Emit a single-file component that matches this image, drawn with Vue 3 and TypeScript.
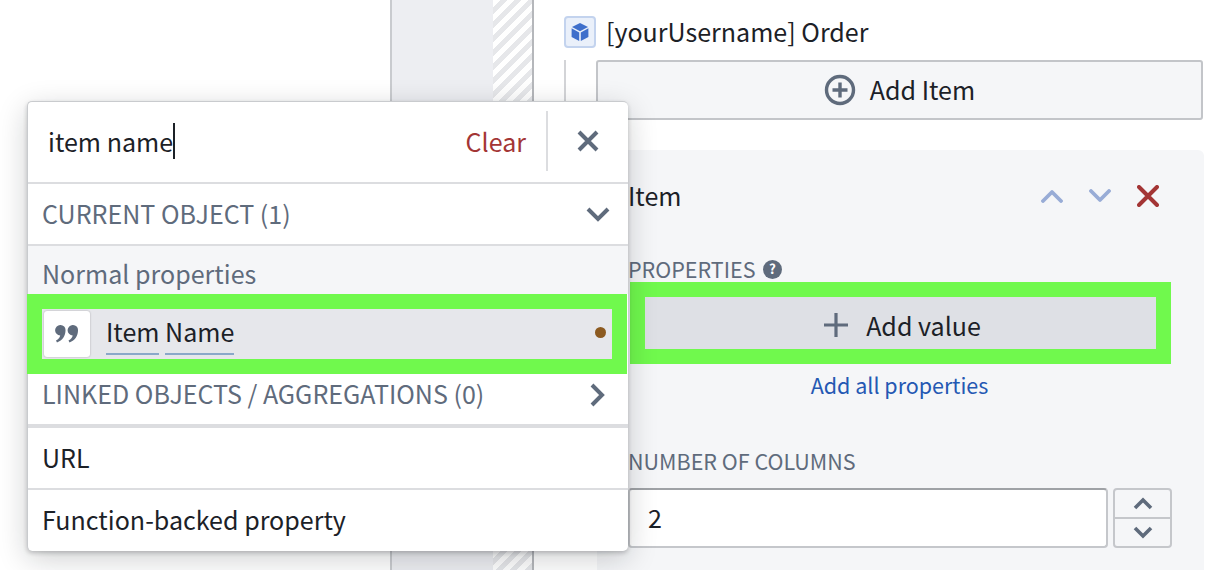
<script setup lang="ts">
const sections = ['URL', 'Function-backed property']
</script>

<template>
  <div class="page">
    <div class="left"></div>
    <div class="rail"></div>
    <div class="hatch"></div>
    <main class="main">
      <div class="obj">
        <span class="cube">
          <svg width="20" height="20" viewBox="0 0 20 20"><path d="M10 1 L18 5 L10 9.2 L2 5Z" fill="#3f6fcb"/><path d="M1.6 6.2 L9.2 10.4 V19 L1.6 15Z" fill="#3f6fcb"/><path d="M18.4 6.2 L10.8 10.4 V19 L18.4 15Z" fill="#3f6fcb"/></svg>
        </span>
        <span class="obj-name">[yourUsername] Order</span>
      </div>
      <div class="add-row">
        <div class="tree-line"></div>
        <button class="add-item">
          <svg width="32" height="32" viewBox="0 0 32 32" fill="none" stroke="#5f6b7c" stroke-width="3.4"><circle cx="16" cy="16" r="13.5"/><path d="M16 8.5v15M8.5 16h15"/></svg>
          <span class="lift">Add Item</span>
        </button>
      </div>
      <section class="card">
        <div class="card-head">
          <span class="card-title">Item</span>
          <div class="card-actions">
            <svg width="22" height="14" viewBox="0 0 22 14" fill="none" stroke="#98acd6" stroke-width="3.8" stroke-linecap="round" stroke-linejoin="round"><path d="M2 12 L11 3 L20 12"/></svg>
            <svg width="22" height="14" viewBox="0 0 22 14" fill="none" stroke="#98acd6" stroke-width="3.8" stroke-linecap="round" stroke-linejoin="round"><path d="M2 2 L11 11 L20 2"/></svg>
            <svg width="22" height="22" viewBox="0 0 22 22" fill="none" stroke="#a33535" stroke-width="4" stroke-linecap="round"><path d="M2 2 L20 20M20 2 L2 20"/></svg>
          </div>
        </div>
        <div class="label props-label">
          PROPERTIES
          <svg width="19" height="19" viewBox="0 0 20 20"><circle cx="10" cy="10" r="10" fill="#5f6b7c"/><text x="10" y="15" text-anchor="middle" font-size="14" font-weight="700" fill="#fff" font-family="Noto Sans CJK SC, sans-serif">?</text></svg>
        </div>
        <div class="add-value-frame">
          <button class="add-value">
            <svg width="24" height="24" viewBox="0 0 24 24" stroke="#5f6b7c" stroke-width="3.2"><path d="M12 0v24M0 12h24"/></svg>
            <span>Add value</span>
          </button>
        </div>
        <a class="add-all">Add all properties</a>
        <div class="label cols-label">NUMBER OF COLUMNS</div>
        <div class="num-row">
          <div class="num-input">2</div>
          <div class="stepper">
            <span class="step"><svg width="20" height="13" viewBox="0 0 20 13" fill="none" stroke="#5f6b7c" stroke-width="3.6"><path d="M2 11 L10 3 L18 11"/></svg></span>
            <span class="step"><svg width="20" height="13" viewBox="0 0 20 13" fill="none" stroke="#5f6b7c" stroke-width="3.6"><path d="M2 2 L10 10 L18 2"/></svg></span>
          </div>
        </div>
      </section>
    </main>

    <div class="popover">
      <div class="search">
        <span class="query">item name</span><span class="caret"></span>
        <span class="clear">Clear</span>
        <span class="vsep"></span>
        <svg class="close" width="22" height="22" viewBox="0 0 22 22" fill="none" stroke="#5f6b7c" stroke-width="4"><path d="M2 2 L20 20M20 2 L2 20"/></svg>
      </div>
      <div class="sec-head first">
        <span>CURRENT OBJECT (1)</span>
        <svg width="24" height="16" viewBox="0 0 24 16" fill="none" stroke="#5f6b7c" stroke-width="4"><path d="M2 3 L12 13 L22 3"/></svg>
      </div>
      <div class="normal">Normal properties</div>
      <div class="green-frame">
        <div class="prop-row">
          <span class="quote">
            <svg width="24" height="18" viewBox="0 0 24 18" fill="#5f6b7c"><path d="M5.5 0a5 5 0 0 1 5 5.4c0 5-3 10-8.500 12L1 15.500c2.500-1.200 3.800-3 4.200-5A5.200 5.200 0 0 1 5.500 0Z"/><path d="M18 0a5 5 0 0 1 5 5.400c0 5-3 10-8.500 12l-1-1.900c2.500-1.200 3.800-3 4.200-5A5.200 5.200 0 0 1 18 0Z"/></svg>
          </span>
          <span class="prop-name"><u>Item</u> <u>Name</u></span>
          <span class="dot"></span>
        </div>
      </div>
      <div class="sec-head linked">
        <span>LINKED OBJECTS / AGGREGATIONS (0)</span>
        <svg width="16" height="24" viewBox="0 0 16 24" fill="none" stroke="#5f6b7c" stroke-width="4"><path d="M3 2 L13 12 L3 22"/></svg>
      </div>
      <div v-for="s in sections" :key="s" class="plain">{{ s }}</div>
    </div>
  </div>
</template>

<style>
html, body { margin: 0; background: #fff; }
</style>

<style scoped>
.page {
  position: relative;
  width: 1220px;
  height: 570px;
  overflow: hidden;
  display: flex;
  background: #fff;
  font-family: "Noto Sans CJK SC", "Noto Sans", sans-serif;
  color: #1c2127;
  font-size: 25.05px;
}
.left { width: 390px; flex: none; }
.rail { width: 103px; flex: none; background: #edeef2; border-left: 2px solid #c9cbcf; box-sizing: border-box; }
.hatch {
  width: 41px; flex: none; box-sizing: border-box;
  border-right: 2px solid #b5b7bb;
  background: repeating-linear-gradient(135deg, #fff 0 5px, #e6e7ea 5px 10px);
}
.main { flex: 1; min-width: 0; padding: 16px 16px 0 30px; display: flex; flex-direction: column; }
.obj { display: flex; align-items: center; gap: 10px; height: 32px; }
.cube {
  width: 32px; height: 32px; box-sizing: border-box; border: 2px solid #c3d3ee; border-radius: 4px;
  background: #eaf0fa; display: flex; align-items: center; justify-content: center;
}
.obj-name { line-height: 30px; padding-bottom: 2px; }
.add-row { display: flex; margin-top: 12px; }
.tree-line { width: 2px; background: #d3d4d7; margin-right: 30px; height: 60px; }
.add-item {
  flex: none; width: 607px; height: 60px; box-sizing: border-box; padding: 0;
  border: 2px solid #c3c5c9; border-radius: 3px; background: #f5f6f8;
  display: flex; align-items: center; justify-content: center; gap: 14px;
  font: inherit; color: inherit;
}
.lift { padding-bottom: 2px; }
.card {
  margin: 30px 0 0 33px; width: 607px; height: 430px; box-sizing: border-box; flex: none;
  background: #f5f6f8; border-radius: 6px; padding: 30px 0 0 31px;
}
.card-head { display: flex; align-items: center; justify-content: space-between; padding-right: 45px; height: 32px; }
.card-title { padding-bottom: 2px; line-height: 30px; }
.card-actions { display: flex; align-items: center; gap: 26px; }
.label { font-size: 21.5px; color: #5f6b7c; line-height: 28px; }
.props-label { display: flex; align-items: center; gap: 8px; margin-top: 43px; }
.add-value-frame {
  width: 541px; height: 82px; box-sizing: border-box; border: 15px solid #70f94d; margin: -1px 0 0 2px;
}
.add-value {
  width: 100%; height: 100%; padding: 4px 0 0 4px; border: 0; background: #dee0e5;
  display: flex; align-items: center; justify-content: center; gap: 18px;
  font: inherit; color: inherit;
}
.add-all { display: block; width: 541px; text-align: center; color: #2458b3; font-size: 21.5px; line-height: 28px; margin-top: 7px; margin-left: 1px; }
.cols-label { margin-top: 48px; }
.num-row { display: flex; margin-top: 13px; gap: 5px; }
.num-input {
  width: 480px; height: 60px; box-sizing: border-box; background: #fff;
  border: 2px solid #c5c7cb; border-top-color: #9fa2a6; border-radius: 4px;
  padding-left: 18px; line-height: 54px;
}
.stepper {
  width: 59px; height: 60px; box-sizing: border-box; border: 2px solid #c5c7cb; border-radius: 4px;
  display: flex; flex-direction: column; background: #f5f6f8;
}
.step { flex: 1; display: flex; align-items: center; justify-content: center; }
.step + .step { border-top: 2px solid #c5c7cb; }

.popover {
  position: absolute; left: 27px; top: 101px; width: 601px; height: 450px; box-sizing: border-box;
  background: #fff; border-radius: 5px; border: 1px solid #c9cbce; border-width: 1px 0 0 1px;
  box-shadow: 0 2px 4px rgba(16, 22, 26, 0.22), 0 8px 30px rgba(16, 22, 26, 0.2);
  display: flex; flex-direction: column;
}
.search {
  height: 82px; box-sizing: border-box; flex: none; display: flex; align-items: center;
  padding: 0 29px 2px 20px; border-bottom: 2px solid #dcdde0;
}
.caret { width: 2px; height: 36px; background: #1c2127; }
.clear { margin-left: auto; color: #a33535; }
.vsep { width: 2px; height: 60px; background: #dcdde0; margin: 0 29px 0 20px; }
.sec-head {
  display: flex; align-items: center; justify-content: space-between; color: #5f6b7c;
  padding: 0 18px 0 14px; flex: none; box-sizing: border-box;
}
.first { height: 62px; border-bottom: 2px solid #dcdde0; padding-bottom: 2px; }
.first svg { margin-top: 2px; }
.normal { height: 48px; flex: none; background: #f5f6f8; color: #5f6b7c; padding: 12px 0 0 14px; box-sizing: border-box; line-height: 30px; }
.green-frame { height: 80px; width: 600px; margin-left: -1px; flex: none; box-sizing: border-box; border: 15px solid #70f94d; }
.prop-row { height: 50px; background: #e6e7eb; display: flex; align-items: center; padding-right: 6px; }
.quote {
  width: 46px; height: 46px; margin-left: 2px; box-sizing: border-box; background: #fff; border-radius: 3px;
  box-shadow: 0 0 2px rgba(0,0,0,.3); display: flex; align-items: center; justify-content: center; flex: none;
}
.prop-name { margin-left: 16px; line-height: 36px; }
.prop-name u { text-decoration: none; border-bottom: 2px solid #8aa8c9; display: inline-block; line-height: 24px; padding-bottom: 10px; }
.dot { margin: 0 0 4px auto; width: 11px; height: 11px; border-radius: 50%; background: #8c5a20; }
.linked { height: 54px; border-bottom: 4px solid #dcdde0; padding-right: 23px; padding-bottom: 12px; }
.linked svg { margin-top: 4px; }
.plain { height: 60px; box-sizing: border-box; flex: none; padding: 0 0 2px 14px; display: flex; align-items: center; }
.plain + .plain { height: 62px; border-top: 2px solid #dcdde0; }
</style>
